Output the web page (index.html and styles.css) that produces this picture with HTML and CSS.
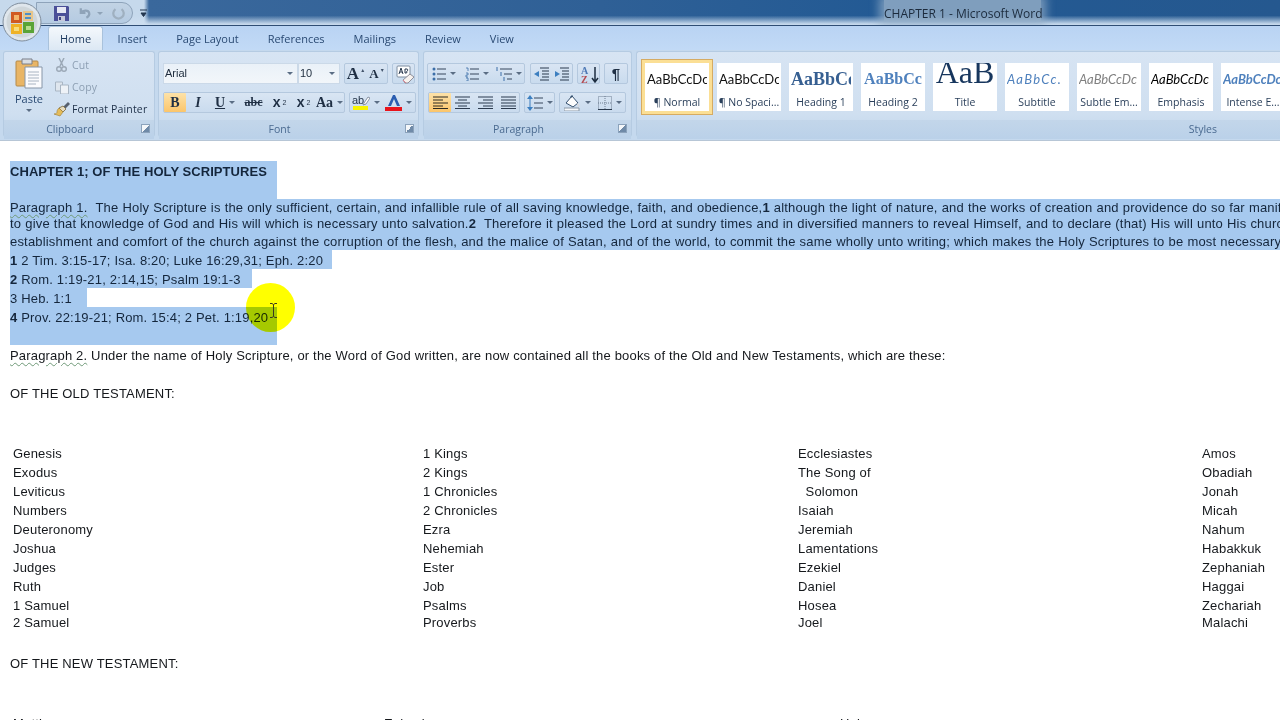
FILE: index.html
```html
<!DOCTYPE html>
<html lang="en">
<head>
<meta charset="utf-8">
<title>CHAPTER 1 - Microsoft Word</title>
<link rel="stylesheet" href="styles.css">
</head>
<body>
<div class="window">
  <header class="titlebar">
    <div class="orb">
      <svg width="44" height="44" viewBox="0 0 44 44">
        <circle cx="22" cy="22" r="19" fill="#dfe6ec" stroke="#7f8d9c"/>
        <circle cx="22" cy="22" r="15.500" fill="#cfd6da"/>
        <path d="M11 12h11v11H11z" fill="#d05a22"/><path d="M23 11h10v10H23z" fill="#e7c58a"/>
        <path d="M11 24h11v10H11z" fill="#efb226"/><path d="M23 22h11v11H23z" fill="#5aa336"/>
        <path d="M14 15h5v5h-5z" fill="#f4b56a"/><path d="M26 26h5v4h-5z" fill="#b8dc8c"/><path d="M14 27h5v4h-5z" fill="#f7dd7c"/>
        <path d="M25 13h6v2h-6zM25 17h6v2h-6z" fill="#4d8fc9"/>
      </svg>
    </div>
    <div class="qat">
      <svg width="15" height="15" viewBox="0 0 15 15"><path d="M0 0h14l1 1v14H0z" fill="#4a4f98"/><path d="M3 1h9v6H3z" fill="#e6e8f4"/><path d="M4 10h7v5H4z" fill="#c5c8da"/><path d="M5 11h2v3H5z" fill="#3c4180"/></svg>
      <svg class="qat-undo" width="14" height="14" viewBox="0 0 15 14"><path d="M3 2v5h5M3 7c2-3 8-4 9 0 .5 2-1 4-3 5" fill="none" stroke="#8fa3b8" stroke-width="2.400"/></svg>
      <span class="caret caret-grey"></span>
      <svg class="qat-redo" width="13" height="13" viewBox="0 0 15 14"><path d="M11 2a6 6 0 1 1-7 0" fill="none" stroke="#9fb0c0" stroke-width="2.600"/></svg>
    </div>
    <svg class="qat-more" width="7" height="8" viewBox="0 0 7 8"><path d="M0 1h7M1 4h5L3.500 7.500z" stroke="#23364f" fill="#23364f"/></svg>
    <div class="doc-title">CHAPTER 1 - Microsoft Word</div>
  </header>

  <nav class="tabs">
    <span class="tab tab-active">Home</span>
    <span class="tab">Insert</span>
    <span class="tab">Page Layout</span>
    <span class="tab">References</span>
    <span class="tab">Mailings</span>
    <span class="tab">Review</span>
    <span class="tab">View</span>
  </nav>

  <section class="ribbon">
    <div class="group g-clip">
      <div class="group-body clip-body">
        <div class="paste">
          <svg width="28" height="31" viewBox="0 0 28 31"><rect x="1" y="3" width="22" height="25" rx="1" fill="#e9b565" stroke="#b48a4a"/><path d="M7 1h10v5H7z" fill="#d9dde2" stroke="#7a7f88"/><path d="M10 9h17v21H10z" fill="#fbfbfd" stroke="#8796a8"/><path d="M13 14h11M13 17h11M13 20h11M13 23h11M13 26h8" stroke="#a9b4c2"/></svg>
          <span class="paste-label">Paste</span>
          <span class="caret"></span>
        </div>
        <div class="clip-list">
          <div class="clip-row off">
            <svg width="14" height="14" viewBox="0 0 14 14"><path d="M4 0l4 8M9 0L5 8" stroke="#9ba8b6" stroke-width="1.500"/><circle cx="4" cy="11" r="2.300" fill="none" stroke="#9ba8b6" stroke-width="1.400"/><circle cx="9" cy="11" r="2.300" fill="none" stroke="#9ba8b6" stroke-width="1.400"/></svg>
            <span>Cut</span>
          </div>
          <div class="clip-row off">
            <svg width="15" height="14" viewBox="0 0 15 14"><path d="M1 2h7v9H1z" fill="#dfe6ee" stroke="#a9b6c4"/><path d="M6 5h8v9H6z" fill="#eef2f7" stroke="#a9b6c4"/></svg>
            <span>Copy</span>
          </div>
          <div class="clip-row">
            <svg width="16" height="15" viewBox="0 0 16 15"><path d="M9 5l5-5 2 2-5 5z" fill="#56606e"/><path d="M9 4l3 3-3 3-4-4z" fill="#e7dcc0" stroke="#8b7d57"/><path d="M5 6l4 4-3 4-6-2c2 0 3-1 3-2s0-2 2-4z" fill="#e5bc5a" stroke="#9a7a32" stroke-width=".6"/></svg>
            <span>Format Painter</span>
          </div>
        </div>
      </div>
      <div class="group-label">Clipboard<i class="launcher"></i></div>
    </div>

    <div class="group g-font">
      <div class="group-body tools">
        <div class="row">
          <div class="combo combo-font"><span>Arial</span><span class="caret"></span></div>
          <div class="combo combo-size"><span>10</span><span class="caret"></span></div>
          <div class="btns w44">
            <b class="btn cell serif big">A<sup class="tiny-up">▴</sup></b>
            <b class="btn cell serif mid">A<sup class="tiny-up">▾</sup></b>
          </div>
          <div class="btns w23">
            <svg class="btn" width="23" height="21" viewBox="0 0 23 21"><rect x="4" y="2" width="13" height="11" rx="1" fill="#fff" stroke="#7f8ea0"/><path d="M6 10l2-6 2 6M7 8h2M12 5h2c1 0 1 2 0 2s1 2-1 2h-1z" fill="none" stroke="#27374c"/><path d="M10 16l7-6 4 3-6 6h-3z" fill="#f7f2ee" stroke="#8f8f9a"/><path d="M10 16l3 3" stroke="#d77f90"/></svg>
          </div>
        </div>
        <div class="row">
          <div class="btns w182">
            <b class="btn cell on serif c22 mark">B</b>
            <i class="btn cell serif c24 mark bold">I</i>
            <u class="btn cell serif bold c30 mark">U<span class="caret"></span></u>
            <s class="btn cell serif bold c27 small">abc</s>
            <span class="btn cell bold c25 script">x<sub class="sm">2</sub></span>
            <span class="btn cell bold c23 script">x<sup class="sm">2</sup></span>
            <b class="btn cell serif c29 mark">Aa<span class="caret"></span></b>
          </div>
          <div class="btns w67">
            <span class="btn cell c33">
              <svg width="18" height="17" viewBox="0 0 18 17"><text x="0" y="10" class="svg-ab">ab</text><path d="M12 9l4-6 2 1-4 6-3 1z" fill="#fff" stroke="#8993a3"/><path d="M1 12h15v4H1z" fill="#f8f400"/></svg>
              <span class="caret"></span>
            </span>
            <span class="btn cell c34">
              <svg width="17" height="17" viewBox="0 0 17 17"><path d="M3 12L8 1h2l5 11h-3L9 5l-3 7z" fill="#2a5db0"/><path d="M0 13h17v4H0z" fill="#e8141c"/></svg>
              <span class="caret"></span>
            </span>
          </div>
        </div>
      </div>
      <div class="group-label">Font<i class="launcher"></i></div>
    </div>

    <div class="group g-para">
      <div class="group-body tools tools-para">
        <div class="row">
          <div class="btns w98">
            <span class="btn cell c32">
              <svg width="14" height="14" viewBox="0 0 14 14"><path d="M5 2h9M5 7h9M5 12h9" stroke="#37475c"/><circle cx="2" cy="2" r="1.500" fill="#3c6ea8"/><circle cx="2" cy="7" r="1.500" fill="#3c6ea8"/><circle cx="2" cy="12" r="1.500" fill="#3c6ea8"/></svg>
              <span class="caret"></span>
            </span>
            <span class="btn cell c34">
              <svg width="14" height="14" viewBox="0 0 14 14"><path d="M5 2h9M5 7h9M5 12h9" stroke="#37475c"/><path d="M1 1h2v3M1 6h2v2H1v2h2M1 11h2v3H1" fill="none" stroke="#3c6ea8" stroke-width=".8"/></svg>
              <span class="caret"></span>
            </span>
            <span class="btn cell c32">
              <svg width="16" height="14" viewBox="0 0 16 14"><path d="M4 2h12M8 7h8M11 12h5" stroke="#37475c"/><path d="M1 0v4M5 5v4M8 10v4" stroke="#3c6ea8"/></svg>
              <span class="caret"></span>
            </span>
          </div>
          <div class="btns w43 ml1">
            <span class="btn cell c21">
              <svg width="15" height="14" viewBox="0 0 15 14"><path d="M6 1h9M8 4h7M8 7h7M8 10h7M6 13h9" stroke="#2b3a4e" stroke-width="1.200"/><path d="M0 7l5-3v6z" fill="#3c7fc0"/></svg>
            </span>
            <span class="btn cell c21">
              <svg width="15" height="14" viewBox="0 0 15 14"><path d="M6 1h9M8 4h7M8 7h7M8 10h7M6 13h9" stroke="#2b3a4e" stroke-width="1.200"/><path d="M6 7L1 4v6z" fill="#3c7fc0"/></svg>
            </span>
          </div>
          <div class="btns w23">
            <svg class="btn" width="23" height="21" viewBox="0 0 23 21"><text x="3" y="10" class="svg-a">A</text><text x="3" y="19" class="svg-z">Z</text><path d="M17 3v14M14 14l3 4 3-4" fill="none" stroke="#1d2d40" stroke-width="1.500"/></svg>
          </div>
          <div class="btns w24"><b class="btn cell pil">¶</b></div>
        </div>
        <div class="row">
          <div class="btns w91 ml1">
            <span class="btn cell c22 on"><svg width="15" height="13" viewBox="0 0 15 13"><path d="M0 1h15M0 4h10M0 7h15M0 10h10M0 12.500h15" stroke="#2d2a22" stroke-width="1.100"/></svg></span>
            <span class="btn cell c23"><svg width="15" height="13" viewBox="0 0 15 13"><path d="M0 1h15M3 4h9M0 7h15M3 10h9M0 12.500h15" stroke="#2b3a4e" stroke-width="1.100"/></svg></span>
            <span class="btn cell c23"><svg width="15" height="13" viewBox="0 0 15 13"><path d="M0 1h15M5 4h10M0 7h15M5 10h10M0 12.500h15" stroke="#2b3a4e" stroke-width="1.100"/></svg></span>
            <span class="btn cell c23"><svg width="15" height="13" viewBox="0 0 15 13"><path d="M0 1h15M0 4h15M0 7h15M0 10h15M0 12.500h15" stroke="#2b3a4e" stroke-width="1.100"/></svg></span>
          </div>
          <div class="btns w31">
            <span class="btn cell c31">
              <svg width="16" height="16" viewBox="0 0 16 16"><path d="M7 3h9M7 8h9M7 13h9" stroke="#37475c"/><path d="M3 0l3 4H0zM3 16l3-4H0z" fill="#3c7fc0"/><path d="M3 4v8" stroke="#3c7fc0"/></svg>
              <span class="caret"></span>
            </span>
          </div>
          <div class="btns w67">
            <span class="btn cell c35">
              <svg width="17" height="16" viewBox="0 0 17 16"><path d="M2 8l6-7 6 7-5 4z" fill="#fdfdfd" stroke="#35506e"/><path d="M6 2l2-2 1 1-2 2z" fill="#35506e"/><path d="M13 8c2 1 3 3 2 4s-2-2-2-4z" fill="#d8d9dd"/><path d="M0 13h15v3H0z" fill="#f7f9fb" stroke="#8a98a8"/></svg>
              <span class="caret"></span>
            </span>
            <span class="btn cell c32">
              <svg width="14" height="14" viewBox="0 0 14 14"><path d="M.5.500h13v13H.5zM7 0v13M0 7h13" fill="none" stroke="#6f7f92" stroke-dasharray="1 1"/><path d="M0 13.500h14" stroke="#2b3a4e"/></svg>
              <span class="caret"></span>
            </span>
          </div>
        </div>
      </div>
      <div class="group-label">Paragraph<i class="launcher"></i></div>
    </div>

    <div class="group g-styles">
      <div class="group-body gallery">
        <div class="style selected"><span class="pv pv-normal">AaBbCcDc</span><span class="st-name">¶ Normal</span></div>
        <div class="style"><span class="pv pv-normal">AaBbCcDc</span><span class="st-name">¶ No Spaci...</span></div>
        <div class="style"><span class="pv pv-h1">AaBbCc</span><span class="st-name">Heading 1</span></div>
        <div class="style"><span class="pv pv-h2">AaBbCc</span><span class="st-name">Heading 2</span></div>
        <div class="style"><span class="pv pv-title">AaB</span><span class="st-name">Title</span></div>
        <div class="style"><span class="pv pv-sub">AaBbCc.</span><span class="st-name">Subtitle</span></div>
        <div class="style"><span class="pv pv-subtle">AaBbCcDc</span><span class="st-name">Subtle Em...</span></div>
        <div class="style"><span class="pv pv-emph">AaBbCcDc</span><span class="st-name">Emphasis</span></div>
        <div class="style"><span class="pv pv-int">AaBbCcDc</span><span class="st-name">Intense E...</span></div>
      </div>
      <div class="group-label label-styles">Styles</div>
    </div>
  </section>

  <main class="doc">
    <div class="line sel w267 head"><b>CHAPTER 1; OF THE HOLY SCRIPTURES</b></div>
    <div class="line sel w267"></div>
    <div class="para-sel">
      <div class="pl pl1"><span class="gram">Paragraph 1.</span>&nbsp; The Holy Scripture is the only sufficient, certain, and infallible rule of all saving knowledge, faith, and obedience,<b>1</b> although the light of nature, and the works of creation and providence do so far manifest</div>
      <div class="pl pl2">to give that knowledge of God and His will which is necessary unto salvation.<b>2</b>&nbsp; Therefore it pleased the Lord at sundry times and in diversified manners to reveal Himself, and to declare (that) His will unto His church;</div>
      <div class="pl pl3">establishment and comfort of the church against the corruption of the flesh, and the malice of Satan, and of the world, to commit the same wholly unto writing; which makes the Holy Scriptures to be most necessary</div>
    </div>
    <div class="line sel w322"><b>1</b> 2 Tim. 3:15-17; Isa. 8:20; Luke 16:29,31; Eph. 2:20</div>
    <div class="line sel w242"><b>2</b> Rom. 1:19-21, 2:14,15; Psalm 19:1-3</div>
    <div class="line sel w77">3 Heb. 1:1</div>
    <div class="line sel w267"><b>4</b> Prov. 22:19-21; Rom. 15:4; 2 Pet. 1:19,20</div>
    <div class="line sel w267"></div>
    <div class="line"><span class="gram">Paragraph 2.</span> Under the name of Holy Scripture, or the Word of God written, are now contained all the books of the Old and New Testaments, which are these:</div>
    <div class="line"></div>
    <div class="line">OF THE OLD TESTAMENT:</div>

    <div class="books old">
      <div class="bcol">
        <span>Genesis</span><span>Exodus</span><span>Leviticus</span><span>Numbers</span><span>Deuteronomy</span><span>Joshua</span><span>Judges</span><span>Ruth</span><span>1 Samuel</span><span class="last">2 Samuel</span>
      </div>
      <div class="bcol">
        <span>1 Kings</span><span>2 Kings</span><span>1 Chronicles</span><span>2 Chronicles</span><span>Ezra</span><span>Nehemiah</span><span>Ester</span><span>Job</span><span>Psalms</span><span class="last">Proverbs</span>
      </div>
      <div class="bcol">
        <span>Ecclesiastes</span><span>The Song of</span><span>&nbsp; Solomon</span><span>Isaiah</span><span>Jeremiah</span><span>Lamentations</span><span>Ezekiel</span><span>Daniel</span><span>Hosea</span><span class="last">Joel</span>
      </div>
      <div class="bcol">
        <span>Amos</span><span>Obadiah</span><span>Jonah</span><span>Micah</span><span>Nahum</span><span>Habakkuk</span><span>Zephaniah</span><span>Haggai</span><span>Zechariah</span><span class="last">Malachi</span>
      </div>
    </div>

    <div class="line new-head">OF THE NEW TESTAMENT:</div>

    <div class="books new">
      <div class="bcol"><span>Matthew</span></div>
      <div class="bcol"><span>Ephesians</span></div>
      <div class="bcol"><span>Hebrews</span></div>
    </div>

    <div class="pointer"></div>
    <svg class="ibeam" width="7" height="15" viewBox="0 0 7 15"><path d="M0 .500h2l1.500 1 1.500-1h2M3.500 1.500v12M0 14.500h2l1.500-1 1.500 1h2" fill="none" stroke="#3a3a20"/></svg>
  </main>
</div>
</body>
</html>
```
FILE: styles.css
```css
* { box-sizing: border-box; }
html, body { margin: 0; padding: 0; }
body {
  width: 1280px;
  height: 720px;
  overflow: hidden;
  background: #fff;
  font-family: "Liberation Sans", Arial, sans-serif;
}
.window { display: flex; flex-direction: column; height: 720px; overflow: hidden; }

/* title bar */
.titlebar {
  position: relative;
  height: 26px;
  flex: none;
  border-bottom: 1px solid #2f4d74;
  background:
    linear-gradient(180deg, rgba(255,255,255,0) 62%, rgba(205,222,240,.95) 96%),
    linear-gradient(90deg, #c6d9ec 0, #c6d9ec 144px, #3a689c 149px, #2f6096 600px, #235a94 880px, #25588f 1280px);
  overflow: hidden;
}
.orb { position: fixed; left: 0; top: 0; width: 44px; height: 44px; z-index: 3; }
.qat {
  position: absolute;
  left: 36px;
  top: 2px;
  width: 97px;
  height: 22px;
  padding-left: 17px;
  display: flex;
  align-items: center;
  gap: 5px;
  border: 1px solid #8ea3ba;
  border-radius: 0 11px 11px 0 / 0 11px 11px 0;
  background: linear-gradient(180deg, #c2d3e4, #b5cbe2);
}
.qat-undo { margin-left: 4px; }
.qat-redo { margin-left: 4px; }
.qat-more { position: absolute; left: 140px; top: 9px; }
.doc-title {
  position: absolute;
  left: 884px;
  top: 0;
  width: 157px;
  height: 21px;
  text-align: center;
  white-space: nowrap;
  font: 12px/27px "Open Sans", sans-serif;
  color: #1c2b3d;
  background: rgba(150,175,200,.8);
  box-shadow: 0 0 10px 5px rgba(150,175,200,.72);
}

/* tabs */
.tabs {
  height: 24px;
  flex: none;
  display: flex;
  align-items: stretch;
  padding-left: 48px;
  background: linear-gradient(180deg, #b9d3f3, #c2daf6);
  font: 11px/25px "Open Sans", sans-serif;
  color: #2a4a73;
}
.tab { padding: 0 14.500px; white-space: nowrap; }
.tab-active {
  padding: 0 11px;
  color: #1f3c60;
  background: linear-gradient(180deg, #f4f8fc, #dce8f4);
  border: 1px solid #a9c2dc;
  border-bottom: 0;
  border-radius: 3px 3px 0 0;
  line-height: 23px;
}

/* ribbon */
.ribbon {
  height: 91px;
  flex: none;
  display: flex;
  gap: 3px;
  padding: 1px 0 4px 3px;
  overflow: hidden;
  background: #c5d9ee;
  border-bottom: 1px solid #b7c6d6;
}
.group {
  flex: none;
  display: flex;
  flex-direction: column;
  height: 86px;
  border: 1px solid #b5cbe2;
  border-bottom: 2px solid #a9dbe6;
  border-radius: 3px;
  background: linear-gradient(180deg, #d7e4f3 0, #cfdff0 75%, #c1d6ec 100%);
}
.g-clip { width: 152px; }
.g-font { width: 261px; }
.g-para { width: 209px; margin-left: 1px; }
.g-styles { flex: 1; margin-left: 1px; border-right: 0; }
.group-body { height: 68px; flex: none; }
.group-label {
  position: relative;
  flex: 1;
  padding-right: 18px;
  text-align: center;
  font: 10.500px/19px "Open Sans", sans-serif;
  color: #4a6a90;
  background: linear-gradient(180deg, #c3d6ea, #bad1e9);
}
.label-styles { text-align: right; padding-right: 68px; }
.launcher {
  position: absolute;
  right: 4px;
  top: 4px;
  width: 9px;
  height: 9px;
  background: linear-gradient(135deg, #f3f6f9 50%, #6f8aa8 50%);
  border: 1px solid #8ba2bb;
}

.caret {
  display: inline-block;
  width: 0;
  height: 0;
  border: 3px solid transparent;
  border-top: 3px solid #5a6d84;
  border-bottom: 0;
}
.caret-grey { border-top-color: #8fa3b8; }

/* clipboard */
.clip-body { display: flex; }
.paste {
  width: 50px;
  padding-top: 6px;
  display: flex;
  flex-direction: column;
  align-items: center;
  font: 11px/14px "Open Sans", sans-serif;
  color: #2a4a73;
}
.paste-label { margin-top: 3px; margin-bottom: 3px; }
.clip-list { padding-top: 2px; display: flex; flex-direction: column; }
.clip-row {
  display: flex;
  align-items: center;
  gap: 2px;
  height: 22px;
  white-space: nowrap;
  font: 10.500px/22px "Open Sans", sans-serif;
  letter-spacing: .15px;
  color: #22344c;
}
.clip-row svg { width: 16px; flex: none; }
.clip-row.off { color: #8d9fb3; }

/* font + paragraph tools */
.tools { padding: 11px 0 0 4px; display: flex; flex-direction: column; gap: 8px; }
.tools-para { padding-left: 3px; }
.row { display: flex; gap: 4px; height: 21px; }
.combo {
  display: flex;
  align-items: center;
  justify-content: space-between;
  height: 21px;
  padding: 0 4px 0 1px;
  background: linear-gradient(180deg, #eaf1f8, #f2f6fa);
  border: 1px solid #cbd9e8;
  font: 11px/19px "Liberation Sans", sans-serif;
  color: #1d2b3c;
}
.combo-font { width: 135px; }
.combo-size { width: 42px; margin-left: -4px; }
.btns {
  display: flex;
  height: 21px;
  border: 1px solid #b4c8de;
  border-radius: 2px;
  background: linear-gradient(180deg, #d9e5f3, #c9dbee);
  flex: none;
}
.btn { flex: none; }
.cell {
  display: flex;
  align-items: center;
  justify-content: center;
  gap: 2px;
  height: 19px;
  color: #1f2f44;
  font-size: 12px;
  line-height: 19px;
  text-decoration-thickness: 1px;
}
.cell .caret { margin-left: 2px; }
.serif { font-family: "Liberation Serif", serif; }
.script { font-size: 14px; }
.mark { font-size: 14px; }
.bold { font-weight: 700; }
.big { font-size: 17px; flex: 1; }
.mid { font-size: 13px; flex: 1; }
.small { font-size: 12px; }
.tiny-up { font-size: 6px; line-height: 6px; align-self: flex-start; margin-top: 3px; color: #41536a; font-family: "DejaVu Sans", sans-serif; }
.sm { font-size: 7px; line-height: 7px; font-weight: 400; }
.pil { font-size: 15px; width: 22px; }
.on { background: linear-gradient(180deg, #fde2a8, #fbc56b); border-radius: 1px; }
.w23 { width: 23px; }
.w24 { width: 24px; }
.w31 { width: 31px; }
.w43 { width: 43px; }
.w44 { width: 44px; }
.w67 { width: 67px; }
.w91 { width: 92px; }
.w98 { width: 98px; }
.w182 { width: 182px; }
.ml1 { margin-left: 1px; }
.c21 { width: 20.500px; }
.c22 { width: 22px; }
.c23 { width: 23px; }
.c24 { width: 24px; }
.c25 { width: 25px; }
.c27 { width: 27px; }
.c29 { width: 29px; }
.c30 { width: 30px; }
.c31 { width: 29px; }
.c32 { width: 32px; }
.c33 { width: 32px; }
.c34 { width: 33px; }
.c35 { width: 34px; }
.svg-ab { font: 11px "Liberation Sans", sans-serif; fill: #26364a; }
.svg-a { font: 700 10px "Liberation Serif", serif; fill: #4d78b5; }
.svg-z { font: 700 10px "Liberation Serif", serif; fill: #b44a50; }

/* styles gallery */
.gallery { display: flex; gap: 8px; padding: 11px 0 0 8px; }
.style {
  flex: none;
  width: 64px;
  height: 48px;
  display: flex;
  flex-direction: column;
  align-items: center;
  overflow: hidden;
  background: #fff;
}
.selected { box-shadow: 0 0 0 3px #fbdf95, 0 0 0 4px #d6ab62; overflow: visible; }
.pv {
  display: block;
  width: 60px;
  height: 30px;
  overflow: hidden;
  white-space: nowrap;
  text-align: center;
  line-height: 32px;
}
.st-name {
  width: 64px;
  height: 18px;
  overflow: hidden;
  white-space: nowrap;
  text-align: center;
  font: 10.500px/18px "Open Sans", sans-serif;
  color: #2a3f5a;
}
.pv-normal { font: 13px/32px "Lato", sans-serif; color: #111; text-align: left; }
.pv-h1 { font: 700 18px/32px "Liberation Serif", serif; color: #365f91; text-align: left; }
.pv-h2 { font: 700 16px/32px "Liberation Serif", serif; color: #4f81bd; }
.pv-title { font: 32px/18px "Liberation Serif", serif; color: #17365d; }
.pv-sub { font: italic 13px/32px "Lato", sans-serif; letter-spacing: 1.300px; color: #4f81bd; text-align: left; }
.pv-subtle { font: italic 13px/32px "Lato", sans-serif; color: #808080; text-align: left; }
.pv-emph { font: italic 13px/32px "Lato", sans-serif; color: #000; text-align: left; }
.pv-int { font: italic 700 13px/32px "Lato", sans-serif; color: #4f81bd; text-align: left; }

/* document */
.doc {
  position: relative;
  flex: 1;
  padding: 20px 0 0 10px;
  overflow: hidden;
  background: #fff;
  font-size: 13px;
  letter-spacing: .18px;
  color: #15181c;
}
.line { height: 19px; line-height: 21px; white-space: nowrap; }
.head { letter-spacing: .06px; }
.sel { background: #a6c9ef; color: #14263c; }
.w267 { width: 267px; }
.w322 { width: 322px; }
.w242 { width: 242px; }
.w77 { width: 77px; }
.para-sel {
  height: 51px;
  margin-right: -10px;
  background: #a6c9ef;
  color: #14263c;
  white-space: nowrap;
  overflow: hidden;
}
.pl { white-space: nowrap; }
.pl1 { height: 17px; line-height: 18px; word-spacing: .25px; }
.pl2 { height: 16px; line-height: 16px; word-spacing: .25px; }
.pl3 { height: 18px; line-height: 20px; word-spacing: .25px; }
.gram { text-decoration: underline wavy #6f9a78 1px; text-underline-offset: 2px; }
.books { display: grid; }
.old { margin-top: 41px; grid-template-columns: 410px 375px 404px 1fr; padding-left: 3px; }
.new { margin-top: 41px; grid-template-columns: 371px 456px 1fr; padding-left: 3px; }
.bcol { display: flex; flex-direction: column; }
.bcol span { height: 19px; line-height: 21px; white-space: nowrap; }
.bcol .last { height: 17px; line-height: 17px; }
.new-head { margin-top: 22px; }

.pointer {
  position: absolute;
  left: 246px;
  top: 142px;
  width: 49px;
  height: 49px;
  border-radius: 50%;
  background: #ffff00;
  mix-blend-mode: multiply;
}
.ibeam { position: absolute; left: 270px; top: 162px; }
```
